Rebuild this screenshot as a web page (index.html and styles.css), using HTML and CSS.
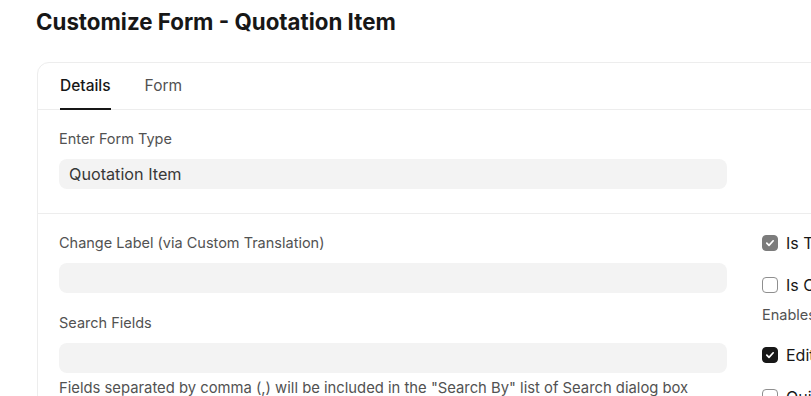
FILE: index.html
```html
<!DOCTYPE html>
<html>
<head>
<meta charset="utf-8">
<link rel="stylesheet" href="styles.css">
</head>
<body>
<div class="page">
  <h1 class="title">Customize Form - Quotation Item</h1>
  <div class="card">
    <div class="tabs">
      <div class="tab active">Details</div>
      <div class="tab">Form</div>
    </div>
    <div class="section first">
      <div class="col-left">
        <div class="label">Enter Form Type</div>
        <div class="input">Quotation Item</div>
      </div>
    </div>
    <div class="section second">
      <div class="col-left">
        <div class="label">Change Label (via Custom Translation)</div>
        <div class="input"></div>
        <div class="label gap">Search Fields</div>
        <div class="input"></div>
        <div class="desc">Fields separated by comma (,) will be included in the "Search By" list of Search dialog box</div>
      </div>
      <div class="col-right">
        <div class="check-row"><span class="cb cb-disabled"><svg viewBox="0 0 16 16"><path d="M4.8 8.2l2.2 2.2 4.2-4.6" fill="none" stroke="#fff" stroke-width="1.7" stroke-linecap="round" stroke-linejoin="round"/></svg></span><span class="cb-label">Is Table</span></div>
        <div class="check-row r2"><span class="cb"></span><span class="cb-label">Is Calendar and Gantt</span></div>
        <div class="cb-desc">Enables Calendar and Gantt views.</div>
        <div class="check-row r3"><span class="cb cb-on"><svg viewBox="0 0 16 16"><path d="M4.8 8.2l2.2 2.2 4.2-4.6" fill="none" stroke="#fff" stroke-width="1.7" stroke-linecap="round" stroke-linejoin="round"/></svg></span><span class="cb-label">Editable Grid</span></div>
        <div class="check-row r4"><span class="cb"></span><span class="cb-label">Quick Entry</span></div>
      </div>
    </div>
  </div>
</div>
</body>
</html>
```
FILE: styles.css
```css
html, body {
  margin: 0;
  padding: 0;
  background: #ffffff;
  overflow: hidden;
  width: 811px;
  height: 396px;
}
body {
  font-family: Inter, "Noto Sans", sans-serif;
  color: #1f272e;
}
.page {
  padding-left: 36px;
  width: 1500px;
}
.title {
  margin: 0;
  padding-top: 8px;
  font-size: 22.3px;
  line-height: 28px;
  font-weight: 700;
  color: #171717;
}
.card {
  margin-top: 26px;
  margin-left: 1px;
  border: 1px solid #ededed;
  border-radius: 12px;
  width: 1300px;
  height: 400px;
}
.tabs {
  display: flex;
  gap: 34px;
  padding-left: 22px;
  height: 46px;
  border-bottom: 1px solid #ededed;
}
.tab {
  font-size: 15.5px;
  line-height: 46px;
  color: #525252;
  box-sizing: border-box;
  height: 47px;
}
.tab.active {
  color: #171717;
  font-weight: 500;
  border-bottom: 2px solid #171717;
  margin-bottom: -1px;
}
.section {
  display: flex;
  gap: 35px;
  padding-left: 21px;
  border-bottom: 1px solid #ededed;
}
.section.first {
  padding-top: 19px;
  height: 84px;
}
.section.second {
  border-bottom: none;
  padding-top: 19px;
}
.col-left {
  width: 668px;
  flex: none;
}
.label {
  font-size: 14.5px;
  line-height: 20px;
  color: #525252;
  margin-bottom: 10px;
}
.label.gap {
  margin-top: 20px;
}
.input {
  height: 30px;
  border-radius: 8px;
  background: #f3f3f3;
  font-size: 16.2px;
  line-height: 30px;
  padding-left: 10px;
  color: #383838;
  box-sizing: border-box;
}
.desc {
  font-size: 14.8px;
  line-height: 20px;
  color: #525252;
  margin-top: 5px;
  white-space: nowrap;
}
.col-right {
  padding-top: 0;
  white-space: nowrap;
}
.check-row {
  display: flex;
  align-items: center;
  gap: 8px;
  height: 20px;
}
.check-row.r2 { margin-top: 22px; }
.check-row.r3 { margin-top: 20px; }
.check-row.r4 { margin-top: 22px; }
.cb {
  width: 16px;
  height: 16px;
  box-sizing: border-box;
  border: 1px solid #8f8f8f;
  border-radius: 4px;
  background: #fff;
  display: inline-flex;
  flex: none;
}
.cb svg { width: 16px; height: 16px; margin: -1px; }
.cb-disabled {
  background: #7c7c7c;
  border-color: #7c7c7c;
}
.cb-on {
  background: #171717;
  border-color: #171717;
}
.cb-label {
  font-size: 16px;
  color: #171717;
}
.cb-desc {
  font-size: 14.5px;
  line-height: 20px;
  color: #525252;
  margin-top: 10px;
}
```
